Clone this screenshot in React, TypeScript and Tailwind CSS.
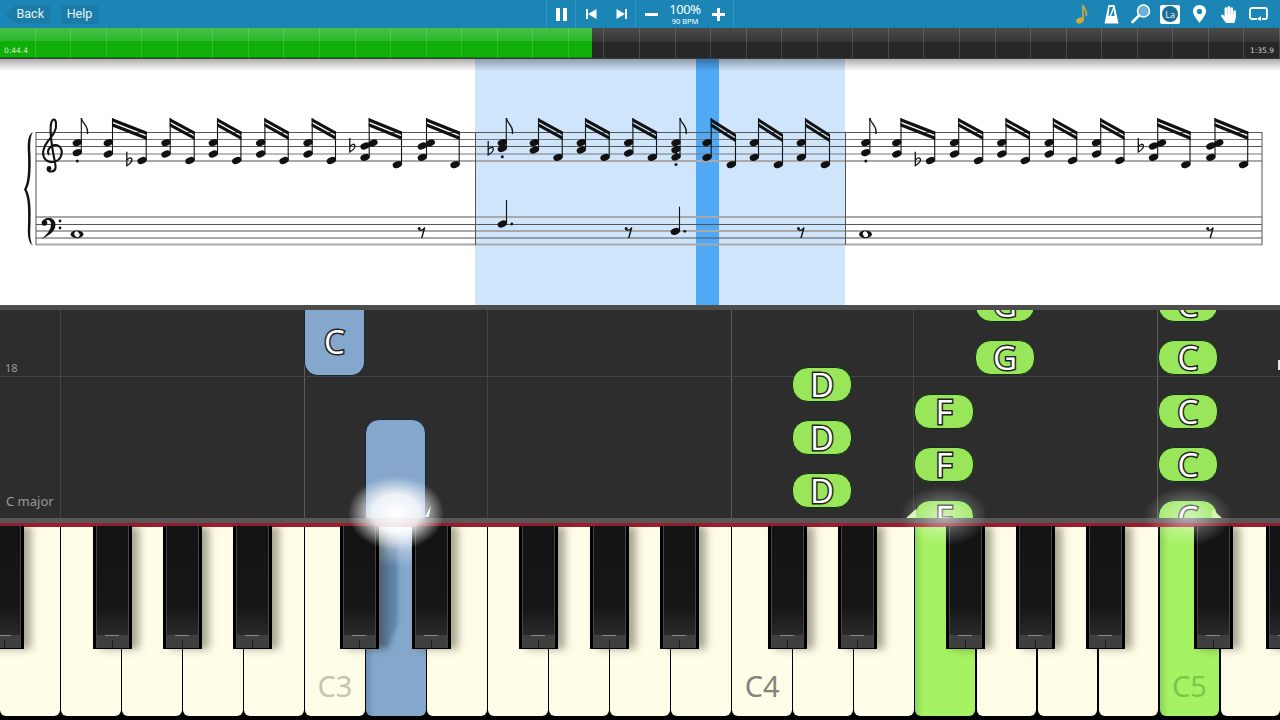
import { FaHandPaper } from "react-icons/fa";

const ink = "#111";

function Head({ x, y }: { x: number; y: number }) {
  return <ellipse cx={x} cy={y} rx={4.8} ry={3.3} fill={ink} transform={`rotate(-20 ${x} ${y})`} />;
}

function Flat({ x, y }: { x: number; y: number }) {
  return (
    <path
      d={`M${x - 2.5} ${y - 9} V${y + 5} C${x} ${y + 3.5} ${x + 3.2} ${y + 1} ${x + 2.6} ${y - 1.5} C${x + 2} ${y - 3.5} ${x} ${y - 3} ${x - 2.5} ${y - 0.8}`}
      fill="none"
      stroke={ink}
      strokeWidth={1.3}
    />
  );
}

// chord with a flag
function Flagged({ x, heads, dot, flat }: { x: number; heads: number[]; dot: number; flat?: number }) {
  const sx = x + 4;
  return (
    <g>
      {heads.map((y) => (
        <Head key={y} x={x} y={y} />
      ))}
      <line x1={sx} y1={118} x2={sx} y2={heads[heads.length - 1]} stroke={ink} strokeWidth={1.1} />
      <path d={`M${sx} 118 C${sx + 1} 124 ${sx + 8} 126 ${sx + 6} 134`} fill="none" stroke={ink} strokeWidth={1.4} />
      <circle cx={x} cy={dot} r={1.5} fill={ink} />
      {flat ? <Flat x={flat} y={150} /> : null}
    </g>
  );
}

// chord + low note joined by two beams
function Beamed({
  x,
  lx,
  heads,
  ly,
  end = 131.5,
  extra,
}: {
  x: number;
  lx: number;
  heads: number[];
  ly: number;
  end?: number;
  extra?: number;
}) {
  const s1 = x + 4.2;
  const s2 = lx + 4.2;
  return (
    <g>
      {heads.map((y) => (
        <Head key={y} x={x} y={y} />
      ))}
      {extra ? <Head x={x + 8} y={extra} /> : null}
      <Head x={lx} y={ly} />
      <line x1={s1} y1={118} x2={s1} y2={heads[heads.length - 1]} stroke={ink} strokeWidth={1.1} />
      <line x1={s2} y1={end} x2={s2} y2={ly} stroke={ink} strokeWidth={1.1} />
      <polygon points={`${s1 - 0.5},118 ${s2 + 0.5},${end} ${s2 + 0.5},${end + 3.4} ${s1 - 0.5},121.4`} fill={ink} />
      <polygon points={`${s1 - 0.5},123 ${s2 + 0.5},${end + 5} ${s2 + 0.5},${end + 8.4} ${s1 - 0.5},126.4`} fill={ink} />
    </g>
  );
}

function Rest({ x }: { x: number }) {
  return (
    <g fill="none" stroke={ink}>
      <circle cx={x - 2.5} cy={228.5} r={1.5} fill={ink} stroke="none" />
      <path d={`M${x - 3} 229 C${x - 2} 231 ${x + 1} 231 ${x + 3} 227.5 L${x} 238`} strokeWidth={1.4} />
    </g>
  );
}

function WholeNote({ x }: { x: number }) {
  return (
    <g>
      <ellipse cx={x} cy={234.3} rx={6.4} ry={3.9} fill={ink} />
      <ellipse cx={x} cy={234.3} rx={2.4} ry={3} fill="#fff" transform={`rotate(-35 ${x} 234.3)`} />
    </g>
  );
}

function DottedQuarter({ x, y, top }: { x: number; y: number; top: number }) {
  return (
    <g>
      <Head x={x} y={y} />
      <line x1={x + 4.2} y1={top} x2={x + 4.2} y2={y} stroke={ink} strokeWidth={1.1} />
      <circle cx={x + 9.5} cy={y} r={1.4} fill={ink} />
    </g>
  );
}

// the same bar comes back as bar three
function RepeatedBar() {
  return (
    <g>
      <Flagged x={77.3} heads={[142.7, 152.7]} dot={161} />
      <Beamed x={108.3} lx={142} heads={[142.7, 154]} ly={160.5} />
      <Flat x={129.3} y={160.7} />
      <Beamed x={166} lx={190} heads={[142.7, 154]} ly={160.5} />
      <Beamed x={213.3} lx={236.7} heads={[142.7, 154]} ly={160.5} />
      <Beamed x={260.7} lx={284} heads={[142.7, 154]} ly={160.5} />
      <Beamed x={308} lx={331.3} heads={[142.7, 154]} ly={160.5} />
      <Beamed x={365} lx={397.3} heads={[146, 157.3]} extra={143} ly={164.7} />
      <Flat x={352.3} y={147} />
      <Beamed x={422.3} lx={455} heads={[146, 157.3]} extra={143} ly={164.7} />
      <WholeNote x={77} />
      <Rest x={421.7} />
    </g>
  );
}

function Score() {
  const bars = [36, 475.5, 845.5, 1262];
  const treble = [132.5, 139.5, 146.5, 154, 161];
  const bass = [217, 224.5, 231, 238, 244.5];
  return (
    <svg className="absolute inset-0" width={1280} height={246} viewBox="0 59 1280 246">
      {treble.map((y, i) => (
        <line key={y} x1={36} x2={1262} y1={y} y2={y} stroke={i === 4 ? "#a9a9a9" : i === 2 || i === 0 ? "#555" : "#777"} strokeWidth={i === 4 ? 2 : 1} />
      ))}
      {bass.map((y, i) => (
        <line key={y} x1={36} x2={1262} y1={y} y2={y} stroke={i % 2 === 0 ? "#a9a9a9" : "#555"} strokeWidth={i % 2 === 0 ? 2 : 1} />
      ))}
      {bars.map((x) => (
        <line key={x} x1={x} x2={x} y1={132} y2={245} stroke="#555" strokeWidth={1} />
      ))}
      {/* brace */}
      <path
        d="M33 132 C27 135 27.5 145 28 155 C28.5 170 28 183 24 189.5 C28 196 28.5 208 28 224 C27.5 235 28 243 33 245.5 C30 242 30 235 30.5 224 C31 208 30.5 196 26.5 189.5 C30.5 183 31 170 30.5 155 C30 145 30 136 33 132Z"
        fill={ink}
      />
      {/* treble clef */}
      <path
        d="M49 155 C46 150 51 145 55 145 C61 145 63 151 61 156 C59 162 50 164 46 160 C41 155 43 147 48 141 C53 135 57 130 56 123 C55.5 119 53 118 51.5 122 C49.5 128 51 140 53 152 C54 158 56 165 55.5 168 C55 172 48 173 47.5 169"
        fill="none"
        stroke={ink}
        strokeWidth={2.1}
      />
      <circle cx={49} cy={168.5} r={2.4} fill={ink} />
      {/* bass clef */}
      <path d="M42 223 C42 217 55 215 55.5 224.5 C55.5 232 48 236 41.5 239 C47 234 51 230 51 224 C51 219 46 219 45 222Z" fill={ink} />
      <circle cx={44.5} cy={223} r={2.8} fill={ink} />
      <circle cx={60} cy={221} r={1.4} fill={ink} />
      <circle cx={60} cy={228} r={1.4} fill={ink} />

      <RepeatedBar />
      <g transform="translate(788.5 0)">
        <RepeatedBar />
      </g>

      {/* bar two */}
      <Flagged x={502.3} heads={[142.7, 148.5]} dot={156.7} flat={490.7} />
      <Beamed x={534.3} lx={558} heads={[142.7, 150]} ly={157.3} />
      <Beamed x={581.3} lx={605} heads={[142.7, 150]} ly={157.3} />
      <Beamed x={628.7} lx={652.3} heads={[142.7, 153]} ly={157.3} />
      <Flagged x={676} heads={[142.7, 149.5, 157]} dot={164.5} />
      <circle cx={676} cy={153} r={1.2} fill={ink} />
      <Beamed x={707} lx={731.3} heads={[142.7, 157.3]} ly={164.7} end={134} />
      <Beamed x={754.3} lx={778.3} heads={[142.7, 157.3]} ly={164.7} end={134} />
      <Beamed x={801.3} lx={825.3} heads={[142.7, 157.3]} ly={164.7} end={134} />
      <DottedQuarter x={502.3} y={224} top={200} />
      <Rest x={628.7} />
      <DottedQuarter x={675.3} y={231.3} top={206.7} />
      <Rest x={801} />
    </svg>
  );
}

function PrevIcon({ flip }: { flip?: boolean }) {
  return (
    <svg width={11} height={10} viewBox="0 0 11 10" className={flip ? "-scale-x-100" : ""}>
      <rect x={0} y={0} width={2} height={10} fill="#fff" />
      <polygon points="2,5 10.5,0 10.5,10" fill="#fff" />
    </svg>
  );
}

function RightIcons() {
  return (
    <div className="ml-auto flex items-center pr-[7px]">
      <div className="flex w-[29.4px] justify-center">
        <svg width={14} height={20} viewBox="0 0 14 20">
          <ellipse cx={5} cy={16.5} rx={4} ry={3} fill="#d6a83a" transform="rotate(-20 5 16.5)" />
          <path d="M8 16 V1 C8.5 5 13 7 11 12" fill="none" stroke="#d6a83a" strokeWidth={1.6} />
        </svg>
      </div>
      <div className="flex w-[29.4px] justify-center">
        <svg width={15} height={19} viewBox="0 0 15 19">
          <polygon points="4.5,0 10.5,0 14.5,18.5 0.5,18.5" fill="#fff" />
          <polygon points="5.5,2 9.5,2 10.5,11 4.5,11" fill="#1b86b5" />
          <line x1={10.5} y1={1} x2={5.5} y2={13} stroke="#fff" strokeWidth={1.5} />
        </svg>
      </div>
      <div className="flex w-[29.4px] justify-center">
        <svg width={20} height={20} viewBox="0 0 20 20">
          <circle cx={12.5} cy={7} r={6} fill="#6cb2d8" stroke="#fff" strokeWidth={1.6} />
          <line x1={8} y1={11.5} x2={1.5} y2={18} stroke="#fff" strokeWidth={2.6} strokeLinecap="round" />
        </svg>
      </div>
      <div className="flex w-[29.4px] justify-center">
        <div className="flex h-[19px] w-[20px] items-center justify-center rounded-[2px] bg-white">
          <div className="flex size-[16px] items-center justify-center rounded-full bg-[#1b6f96] font-['Noto_Sans',sans-serif] text-[9px] leading-none text-[#dff1f8]">
            La
          </div>
        </div>
      </div>
      <div className="flex w-[29.4px] justify-center">
        <svg width={13} height={18} viewBox="0 0 13 18">
          <path
            fillRule="evenodd"
            d="M6.5 0 C10.2 0 13 2.8 13 6.3 C13 10 9 14.5 6.5 18 C4 14.5 0 10 0 6.3 C0 2.8 2.8 0 6.5 0Z M6.5 3.8 A2.6 2.6 0 1 0 6.5 9 A2.6 2.6 0 1 0 6.5 3.8Z"
            fill="#fff"
          />
        </svg>
      </div>
      <div className="flex w-[29.4px] justify-center">
        <FaHandPaper className="size-[17px] text-white" />
      </div>
      <div className="flex w-[29.4px] justify-center">
        <svg width={19} height={14} viewBox="0 0 19 14">
          <path d="M8 12 H3 C1.8 12 1 11.2 1 10 V3 C1 1.8 1.8 1 3 1 H16 C17.2 1 18 1.8 18 3 V10 C18 11.2 17.2 12 16 12 H13" fill="none" stroke="#fff" strokeWidth={1.8} />
          <polygon points="8,12 12,9 12,14" fill="#fff" />
        </svg>
      </div>
    </div>
  );
}

function Toolbar() {
  return (
    <div className="flex h-[28px] items-center bg-[#1b86b5] font-['Roboto',sans-serif] text-white">
      <div className="flex w-[546px] items-center pl-[5px]">
        <div className="flex h-[19px] w-[45px] items-center justify-end bg-[#1b7ca8] pr-[6px] text-[12.5px] text-[#e8f5fa] [clip-path:polygon(25%_0,100%_0,100%_100%,25%_100%,0_50%)]">
          Back
        </div>
        <div className="ml-[11px] flex h-[19px] w-[37px] items-center justify-center bg-[#1b7ca8] text-[12.5px] text-[#e8f5fa]">
          Help
        </div>
      </div>
      <div className="flex h-full w-[30px] items-center justify-center gap-[3px] border-x border-[#2f94bf]">
        <div className="h-[13px] w-[4px] bg-white" />
        <div className="h-[13px] w-[4px] bg-white" />
      </div>
      <div className="flex h-full w-[31px] items-center justify-center">
        <PrevIcon />
      </div>
      <div className="flex h-full w-[29px] items-center justify-center border-r border-[#2f94bf]">
        <PrevIcon flip />
      </div>
      <div className="flex h-full w-[98px] items-center border-r border-[#2f94bf]">
        <div className="ml-[9px] h-[3px] w-[13px] bg-white" />
        <div className="ml-[12px] flex w-[30px] flex-col items-center font-['Noto_Sans',sans-serif] leading-none">
          <span className="text-[13px] tracking-[-0.4px]">100%</span>
          <span className="mt-[2px] text-[7.5px]">90 BPM</span>
        </div>
        <div className="relative ml-[12px] size-[13px]">
          <div className="absolute left-0 top-[5px] h-[3px] w-[13px] bg-white" />
          <div className="absolute left-[5px] top-0 h-[13px] w-[3px] bg-white" />
        </div>
      </div>
      <RightIcons />
    </div>
  );
}

function Progress() {
  return (
    <div className="relative h-[31px] border-b border-[#3a3a3a] bg-[linear-gradient(#4a4a4a,#363636_45%,#272727_46%,#262626)] font-['DejaVu_Sans',sans-serif] text-[7.5px]">
      <div className="absolute inset-y-0 left-0 w-[592px] border-b border-[#0a7f0a] bg-[linear-gradient(#46c046,#2cb72c_45%,#10ae08_46%,#10ae08)]" />
      <div className="absolute inset-0 grid grid-cols-[repeat(36,1fr)]">
        {Array.from({ length: 36 }, (_, i) => (
          <div key={i} className="border-r border-white/15" />
        ))}
      </div>
      <span className="absolute bottom-[2px] left-[4px] text-[#cdeec6]">0:44.4</span>
      <span className="absolute bottom-[2px] right-[6px] text-[#cfcfcf]">1:35.9</span>
    </div>
  );
}

function Sheet() {
  return (
    <div className="relative h-[246px] overflow-hidden bg-white">
      <div className="flex h-full">
        <div className="w-[475px]" />
        <div className="flex w-[370px] bg-[#cfe5fb] pl-[221px]">
          <div className="w-[23px] bg-[#4fa9f5]" />
        </div>
      </div>
      <Score />
      <div className="absolute inset-x-0 top-0 h-[12px] bg-[linear-gradient(rgba(0,0,0,0.32),transparent)]" />
    </div>
  );
}

const greenNotes = [
  { pos: "left-[792px] top-[57px]", label: "D" },
  { pos: "left-[792px] top-[110px]", label: "D" },
  { pos: "left-[792px] top-[163px]", label: "D" },
  { pos: "left-[914px] top-[84px]", label: "F" },
  { pos: "left-[914px] top-[137px]", label: "F" },
  { pos: "left-[914px] top-[190px]", label: "F" },
  { pos: "left-[975px] top-[-23px]", label: "G" },
  { pos: "left-[975px] top-[30px]", label: "G" },
  { pos: "left-[1158px] top-[-23px]", label: "C" },
  { pos: "left-[1158px] top-[30px]", label: "C" },
  { pos: "left-[1158px] top-[84px]", label: "C" },
  { pos: "left-[1158px] top-[137px]", label: "C" },
  { pos: "left-[1158px] top-[190px]", label: "C" },
];

const gridLines = [
  "left-[60px] bg-[#444]",
  "left-[304px] bg-[#5c5c5c]",
  "left-[487px] bg-[#444]",
  "left-[731px] bg-[#5c5c5c]",
  "left-[913px] bg-[#444]",
  "left-[1157px] bg-[#5c5c5c]",
];

const letter =
  "font-['Open_Sans',sans-serif] text-[33px] leading-none text-white [-webkit-text-stroke:3px_#222] [paint-order:stroke_fill]";

function FallingNotes() {
  return (
    <div className="relative h-[218px] overflow-hidden border-t-[5px] border-b-[5px] border-t-[#4d4d4d] border-b-[#585858] bg-[#2d2d2d] font-['Noto_Sans',sans-serif]">
      {gridLines.map((line) => (
        <div key={line} className={`absolute inset-y-0 w-px ${line}`} />
      ))}
      <div className="absolute inset-x-0 top-[66px] h-px bg-[#444]" />
      <span className="absolute left-[5px] top-[52px] text-[11px] leading-none text-[#9a9a9a]">18</span>
      <span className="absolute left-[6px] top-[185px] text-[13px] leading-none text-[#9a9a9a]">C major</span>

      <div className="absolute left-[304px] top-0 flex h-[66px] w-[61px] items-center justify-center rounded-b-[14px] border border-t-0 border-[#15263a] bg-[#84a7cb] pb-[3px]">
        <span className={letter}>C</span>
      </div>
      <div className="absolute left-[365px] top-[109px] h-[110px] w-[61px] rounded-t-[14px] border border-[#15263a] bg-[#84a7cb]" />

      {greenNotes.map((n) => (
        <div
          key={n.pos}
          className={`absolute flex h-[35px] w-[60px] items-center justify-center rounded-[16px] border border-[#0f3310] bg-[#99e65b] ${n.pos}`}
        >
          <span className={letter}>{n.label}</span>
        </div>
      ))}
      <div className="absolute right-0 top-[50px] h-[10px] w-[2px] bg-[#e5e5e5]" />
    </div>
  );
}

const whiteKeys = Array.from({ length: 21 }, (_, i) => i);
const blackKeys = [
  "left-[-15px]",
  "left-[93px]",
  "left-[163px]",
  "left-[233px]",
  "left-[340px]",
  "left-[412px]",
  "left-[519px]",
  "left-[590px]",
  "left-[660px]",
  "left-[768px]",
  "left-[838px]",
  "left-[946px]",
  "left-[1016px]",
  "left-[1086px]",
  "left-[1194px]",
  "left-[1266px]",
];

function WhiteKey({ i }: { i: number }) {
  const blue = i === 6;
  const green = i === 15 || i === 19;
  const label = i === 5 ? "C3" : i === 12 ? "C4" : i === 19 ? "C5" : null;
  const color = i === 5 ? "text-[#c6c4b0]" : i === 12 ? "text-[#85847a]" : "text-[#7cc74a]";
  const fill = blue
    ? "bg-[linear-gradient(90deg,#6b8fb5,#84a7cb_8px)]"
    : green
      ? "bg-[linear-gradient(90deg,#8ad457,#a5f263_8px)]"
      : "bg-[#fffde8]";
  return (
    <div className={`relative flex flex-1 items-end justify-center overflow-hidden rounded-b-[6px] pb-[16px] ${fill}`}>
      {blue && (
        <>
          <div className="absolute inset-x-0 top-0 h-[120px] blur-[2px]">
            <div className="h-full bg-[#5f84ab] [clip-path:polygon(0_0,53%_0,53%_80%,38%_100%,0_100%)]" />
          </div>
          <div className="absolute inset-x-0 top-0 h-[40px] bg-[linear-gradient(rgba(255,255,255,0.75),transparent)]" />
        </>
      )}
      {label && <span className={`relative text-[29px] leading-none ${color}`}>{label}</span>}
    </div>
  );
}

function Keyboard() {
  return (
    <div className="relative h-[197px] bg-black font-['Noto_Sans',sans-serif]">
      <div className="h-[4px] bg-[#a01b2e]" />
      <div className="flex h-[189px] gap-[1.5px]">
        {whiteKeys.map((i) => (
          <WhiteKey key={i} i={i} />
        ))}
      </div>
      {blackKeys.map((pos) => (
        <div
          key={pos}
          className={`absolute top-[3px] h-[123px] w-[38.5px] bg-black px-[3px] pb-[1px] shadow-[7px_0_8px_rgba(60,60,40,0.45)] ${pos}`}
        >
          <div className="flex h-full flex-col bg-[#444] px-px">
            <div className="flex-1 bg-[linear-gradient(#131313,#161616_75%,#2a2a2a)]" />
            <div className="relative flex h-[13px] justify-center rounded-t-[5px] bg-[#3f3f3f]">
              <div className="h-px w-[14px] bg-[#8a8a8a]" />
              <div className="absolute bottom-0 left-1/2 h-[8px] w-px bg-[#1c1c1c]" />
            </div>
          </div>
        </div>
      ))}
    </div>
  );
}

export default function App() {
  return (
    <div className="relative h-[720px] w-[1280px] overflow-hidden bg-black">
      <Toolbar />
      <Progress />
      <Sheet />
      <FallingNotes />
      <Keyboard />

      {/* key press glows */}
      <div className="absolute left-[348px] top-[476px] h-[74px] w-[96px] bg-[radial-gradient(closest-side,#fff,rgba(255,255,255,0.85)_50%,transparent)]" />
      <div className="absolute left-[425px] top-[506px] h-[11px] w-[6px] bg-white [clip-path:polygon(100%_0,60%_100%,0_100%)]" />
      <div className="absolute left-[900px] top-[486px] h-[60px] w-[88px] bg-[radial-gradient(closest-side,rgba(255,255,255,0.55),rgba(255,255,255,0.22)_55%,transparent)]" />
      <div className="absolute left-[1144px] top-[486px] h-[60px] w-[88px] bg-[radial-gradient(closest-side,rgba(255,255,255,0.55),rgba(255,255,255,0.22)_55%,transparent)]" />
      <div className="absolute left-[906px] top-[509px] h-[9px] w-[10px] bg-[#d6f7b8] [clip-path:polygon(100%_0,100%_100%,0_100%)]" />
      <div className="absolute left-[1212px] top-[509px] h-[9px] w-[10px] bg-[#d6f7b8] [clip-path:polygon(0_0,100%_100%,0_100%)]" />
    </div>
  );
}
